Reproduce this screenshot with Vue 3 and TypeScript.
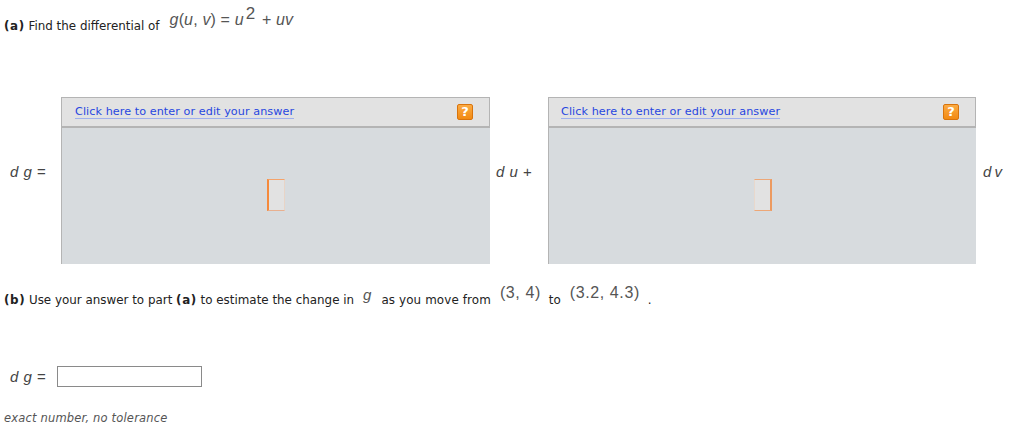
<template>
  <div class="page">
    <div class="line line--a">
      <span class="text"><b>(a)</b> Find the differential of</span>
      <span class="math math--title"><i>g</i>(<i>u</i>, <i>v</i>) = <i>u</i><sup>2</sup> + <i>uv</i></span>
    </div>

    <div class="answer-row">
      <span class="label label--dg"><i>d g</i> =</span>
      <div class="editor">
        <div class="editor__bar">
          <a class="editor__link">Click here to enter or edit your answer</a>
          <span class="help">?</span>
        </div>
        <div class="editor__body"><span class="slot slot--orange"></span></div>
      </div>
      <span class="label label--du"><i>d u</i> +</span>
      <div class="editor editor--second">
        <div class="editor__bar">
          <a class="editor__link">Click here to enter or edit your answer</a>
          <span class="help">?</span>
        </div>
        <div class="editor__body"><span class="slot slot--blue"></span></div>
      </div>
      <span class="label label--dv"><i>d v</i></span>
    </div>

    <div class="line line--b">
      <span class="text"><b>(b)</b> Use your answer to part <b>(a)</b> to estimate the change in</span>
      <span class="math math--g"><i>g</i></span>
      <span class="text text--wide">as you move from</span>
      <span class="math math--pt">(3, 4)</span>
      <span class="text">to</span>
      <span class="math math--pt">(3.2, 4.3)</span>
      <span class="text">.</span>
    </div>

    <div class="result">
      <span class="label"><i>d g</i> =</span>
      <input class="result__input" type="text" />
    </div>

    <div class="note">exact number, no tolerance</div>
  </div>
</template>

<script setup lang="ts">
</script>

<style>
body {
  background: #fff;
}
</style>

<style scoped>
.page {
  width: 1024px;
  height: 437px;
  padding: 0 0 0 4px;
  box-sizing: border-box;
  overflow: hidden;
  font-family: "DejaVu Sans", Verdana, sans-serif;
  font-size: 11.9px;
  color: #222;
}

.text b {
  letter-spacing: 0.6px;
}

.text--wide {
  letter-spacing: 0.12px;
}

.line {
  display: flex;
  align-items: flex-end;
}

.line--a {
  padding-top: 10px;
  height: 24px;
  gap: 10px;
}

.line--b {
  margin-top: 18px;
  height: 26px;
  gap: 8px;
}

.text {
  line-height: 16px;
  white-space: nowrap;
}

.math {
  font-family: "Liberation Sans", Arial, sans-serif;
  color: #555;
  white-space: nowrap;
}

.math--title {
  font-size: 16px;
  line-height: 20px;
  padding-bottom: 4px;
  letter-spacing: 0.15px;
}

.math--title sup {
  font-size: 17px;
  line-height: 0;
  margin: 0 2px;
}

.math--g {
  font-size: 15px;
  padding: 0 2px 5px 1px;
}

.math--pt {
  font-size: 16px;
  letter-spacing: 0.6px;
  padding-bottom: 6px;
  margin-left: 1px;
}

.answer-row {
  display: flex;
  align-items: flex-start;
  margin-top: 63px;
  margin-left: -4px;
  padding-left: 10px;
}

.label {
  font-family: "Liberation Sans", Arial, sans-serif;
  font-size: 15px;
  word-spacing: 1px;
  color: #444;
  white-space: nowrap;
}

.label--dg {
  width: 51px;
  padding-top: 66px;
}

.label--du {
  width: 58px;
  box-sizing: border-box;
  padding: 66px 0 0 6px;
}

.label--dv {
  padding: 66px 0 0 7px;
  word-spacing: -1px;
}

.editor {
  width: 429px;
  height: 167px;
  display: flex;
  flex-direction: column;
  background: #d7dbde;
}

.editor--second {
  width: 428px;
}

.editor--second .editor__bar {
  padding-left: 12px;
}

.editor__bar {
  height: 31px;
  box-sizing: border-box;
  display: flex;
  align-items: center;
  justify-content: space-between;
  padding: 0 16px 0 13px;
  background: #e2e2e2;
  border: 1px solid #b4b4b4;
  border-bottom-width: 2px;
}

.editor__link {
  font-size: 11.2px;
  color: #2747e0;
  letter-spacing: 0.07px;
  border-bottom: 1px solid #9fb0ee;
  line-height: 13px;
}

.help {
  width: 16px;
  height: 16px;
  box-sizing: border-box;
  border-radius: 2px;
  background: linear-gradient(#fbab45, #f28a12);
  border: 1px solid #d9740c;
  color: #fff;
  font-size: 13px;
  font-weight: 700;
  line-height: 14px;
  text-align: center;
}

.editor__body {
  flex: 1;
  border-left: 1px solid #b4b4b4;
  display: flex;
  justify-content: center;
  padding-top: 51px;
}

.slot {
  width: 18px;
  height: 32px;
  box-sizing: border-box;
  background: #e2e2e2;
}

.slot--orange {
  border-top: 1px solid #f5a36a;
  border-left: 2px solid #f58a3c;
  border-bottom: 1px solid #e8b090;
  border-right: 1px solid #e8d4c6;
}

.slot--blue {
  border-top: 1px solid #eda777;
  border-right: 2px solid #ec9a60;
  border-bottom: 1px solid #eda777;
  border-left: 1px solid #e8d8cc;
}

.result {
  display: flex;
  align-items: center;
  gap: 11px;
  margin-top: 58px;
  padding-left: 6px;
}

.result__input {
  width: 145px;
  height: 21px;
  box-sizing: border-box;
  margin: 0;
  padding: 0;
  border: 1px solid #8a8a8a;
  background: #fff;
}

.note {
  margin-top: 24px;
  font-size: 11.5px;
  font-style: italic;
  color: #555;
  letter-spacing: 0.18px;
}
</style>
